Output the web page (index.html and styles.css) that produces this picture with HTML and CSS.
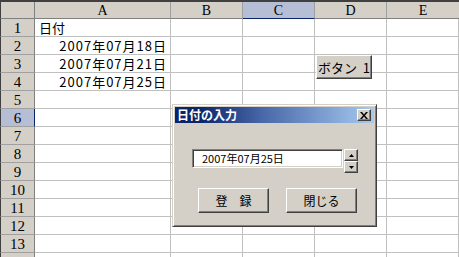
FILE: index.html
```html
<!DOCTYPE html>
<html lang="ja">
<head>
<meta charset="utf-8">
<link rel="stylesheet" href="styles.css">
</head>
<body>
<div class="sheet">
  <div class="corner"></div>
  <div class="ch">A</div>
  <div class="ch">B</div>
  <div class="ch sel">C</div>
  <div class="ch">D</div>
  <div class="ch last">E</div>

  <div class="rh">1</div><div class="c txt">日付</div><div class="c"></div><div class="c"></div><div class="c"></div><div class="c"></div>
  <div class="rh">2</div><div class="c num">2007年07月18日</div><div class="c"></div><div class="c"></div><div class="c"></div><div class="c"></div>
  <div class="rh">3</div><div class="c num">2007年07月21日</div><div class="c"></div><div class="c"></div><div class="c"></div><div class="c"></div>
  <div class="rh">4</div><div class="c num">2007年07月25日</div><div class="c"></div><div class="c"></div><div class="c"></div><div class="c"></div>
  <div class="rh">5</div><div class="c"></div><div class="c"></div><div class="c"></div><div class="c"></div><div class="c"></div>
  <div class="rh sel">6</div><div class="c"></div><div class="c"></div><div class="c"></div><div class="c"></div><div class="c"></div>
  <div class="rh">7</div><div class="c"></div><div class="c"></div><div class="c"></div><div class="c"></div><div class="c"></div>
  <div class="rh">8</div><div class="c"></div><div class="c"></div><div class="c"></div><div class="c"></div><div class="c"></div>
  <div class="rh">9</div><div class="c"></div><div class="c"></div><div class="c"></div><div class="c"></div><div class="c"></div>
  <div class="rh">10</div><div class="c"></div><div class="c"></div><div class="c"></div><div class="c"></div><div class="c"></div>
  <div class="rh">11</div><div class="c"></div><div class="c"></div><div class="c"></div><div class="c"></div><div class="c"></div>
  <div class="rh">12</div><div class="c"></div><div class="c"></div><div class="c"></div><div class="c"></div><div class="c"></div>
  <div class="rh">13</div><div class="c"></div><div class="c"></div><div class="c"></div><div class="c"></div><div class="c"></div>
  <div class="rh"></div><div class="c"></div><div class="c"></div><div class="c"></div><div class="c"></div><div class="c"></div>
</div>

<button class="sheet-btn">ボタン&nbsp;1</button>

<div class="dialog">
  <div class="titlebar">
    <span class="title">日付の入力</span>
    <span class="close">
      <svg width="8" height="7" viewBox="0 0 8 7"><path d="M0 0h2l2 2.5L6 0h2L5 3.5 8 7H6L4 4.5 2 7H0l3-3.5z" fill="#000"/></svg>
    </span>
  </div>
  <div class="dbody">
    <div class="field-row">
      <div class="field">2007年07月25日</div>
      <div class="spin">
        <div class="sb"><svg width="5" height="3" viewBox="0 0 5 3"><path d="M2.5 0L5 3H0z" fill="#000"/></svg></div>
        <div class="sb"><svg width="5" height="3" viewBox="0 0 5 3"><path d="M0 0h5L2.5 3z" fill="#000"/></svg></div>
      </div>
    </div>
    <div class="btn-row">
      <button class="dbtn">登　録</button>
      <button class="dbtn">閉じる</button>
    </div>
  </div>
</div>
</body>
</html>
```

FILE: styles.css
```css
html, body {
  margin: 0;
  padding: 0;
}
body {
  width: 459px;
  height: 257px;
  overflow: hidden;
  background: #fff;
  position: relative;
  font-family: "Noto Sans CJK JP", "Liberation Sans", sans-serif;
}
.sheet {
  display: grid;
  grid-template-columns: 35px 136px 72px 72px 72px 72px;
  grid-template-rows: 17px repeat(14, 18px);
  border-top: 2px solid #404040;
  box-sizing: border-box;
  height: 257px;
  overflow: hidden;
}
.corner, .ch, .rh {
  background: #d4d0c8;
  box-sizing: border-box;
  font-family: "Liberation Serif", "DejaVu Serif", serif;
  font-size: 14px;
  color: #000;
  display: flex;
  align-items: center;
  justify-content: center;
}
.corner {
  border-right: 1px solid #808080;
  border-bottom: 1px solid #808080;
  border-left: 1px solid #404040;
}
.ch {
  border-right: 1px solid #a0a0a0;
  border-bottom: 1px solid #808080;
  padding-top: 1px;
}
.ch.last {
  border-right: none;
}
.ch.sel {
  background: #b6bed6;
  border-bottom: 1px solid #0a246a;
}
.rh {
  border-left: 1px solid #404040;
  border-right: 1px solid #808080;
  border-bottom: 1px solid #a0a0a0;
  padding-top: 2px;
  font-size: 15px;
}
.rh.sel {
  background: #b6bed6;
  border-right: 1px solid #0a246a;
}
.c {
  box-sizing: border-box;
  border-right: 1px solid #c0c0c0;
  border-bottom: 1px solid #c0c0c0;
  font-size: 13px;
  line-height: 17px;
  white-space: nowrap;
  color: #000;
  display: flex;
  align-items: flex-end;
}
.c.txt {
  padding-left: 4px;
}
.c.num {
  justify-content: flex-end;
  padding-right: 3px;
  letter-spacing: 1px;
}

.sheet-btn {
  position: absolute;
  left: 316px;
  top: 55px;
  width: 56px;
  height: 24px;
  margin: 0;
  padding: 0;
  background: #d4d0c8;
  border: 1px solid;
  border-color: #fff #404040 #404040 #fff;
  box-shadow: inset -1px -1px #808080;
  font-family: "Noto Sans CJK JP", sans-serif;
  font-size: 13px;
  word-spacing: 3px;
  color: #000;
  white-space: nowrap;
}

.dialog {
  position: absolute;
  left: 172px;
  top: 104px;
  width: 205px;
  height: 123px;
  box-sizing: border-box;
  background: #d4d0c8;
  border: 1px solid;
  border-color: #d4d0c8 #404040 #404040 #d4d0c8;
  box-shadow: inset 1px 1px #fff, inset -1px -1px #808080;
  padding: 2px;
  display: flex;
  flex-direction: column;
}
.titlebar {
  height: 16px;
  background: linear-gradient(90deg, #0a246a 0%, #0a246a 12%, #4a6aaa 45%, #a6caf0 100%);
  display: flex;
  align-items: center;
  justify-content: space-between;
  padding: 0 3px 0 2px;
}
.title {
  color: #fff;
  font-weight: bold;
  font-size: 12px;
  line-height: 16px;
}
.close {
  width: 14px;
  height: 12px;
  box-sizing: border-box;
  background: #d4d0c8;
  border: 1px solid;
  border-color: #fff #404040 #404040 #fff;
  box-shadow: inset -1px -1px #808080;
  display: flex;
  align-items: center;
  justify-content: center;
}
.dbody {
  flex: 1;
  display: flex;
  flex-direction: column;
  padding: 26px 0 0 17px;
}
.field-row {
  display: flex;
  align-items: flex-start;
}
.field {
  width: 151px;
  height: 19px;
  box-sizing: border-box;
  background: #fff;
  border: 1px solid;
  border-color: #808080 #fff #fff #808080;
  box-shadow: inset 1px 1px #404040, inset -1px -1px #d4d0c8;
  font-size: 11px;
  line-height: 17px;
  padding-left: 9px;
  color: #000;
}
.spin {
  display: flex;
  flex-direction: column;
  margin-left: 1px;
}
.sb {
  width: 14px;
  height: 12px;
  box-sizing: border-box;
  background: #d4d0c8;
  border: 1px solid;
  border-color: #fff #404040 #404040 #fff;
  box-shadow: inset -1px -1px #808080;
  display: flex;
  align-items: center;
  justify-content: center;
}
.btn-row {
  display: flex;
  gap: 17px;
  margin-top: 15px;
  padding-left: 6px;
}
.dbtn {
  width: 71px;
  height: 25px;
  margin: 0;
  padding: 0;
  background: #d4d0c8;
  border: 1px solid;
  border-color: #fff #404040 #404040 #fff;
  box-shadow: inset -1px -1px #808080;
  font-family: "Noto Sans CJK JP", sans-serif;
  font-size: 12px;
  color: #000;
}
```
